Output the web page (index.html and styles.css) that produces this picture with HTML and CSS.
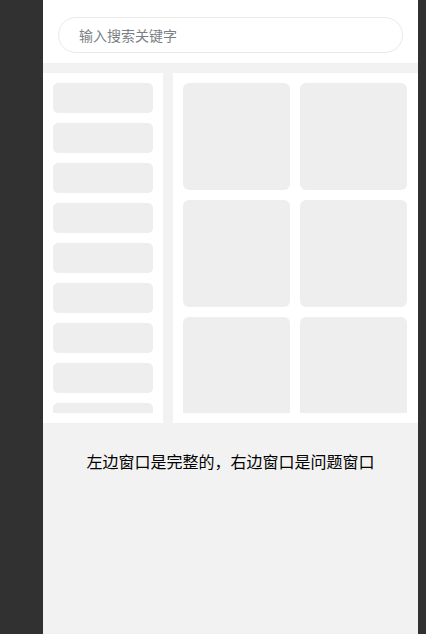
FILE: index.html
```html
<!DOCTYPE html>
<html lang="zh-CN">
<head>
<meta charset="utf-8">
<title>骨架屏</title>
<link rel="stylesheet" href="styles.css">
</head>
<body>
<div class="phone">
  <div class="header">
    <input class="search" type="text" placeholder="输入搜索关键字">
  </div>
  <div class="content">
    <div class="side">
      <div class="side-list">
        <div class="side-item"></div>
        <div class="side-item"></div>
        <div class="side-item"></div>
        <div class="side-item"></div>
        <div class="side-item"></div>
        <div class="side-item"></div>
        <div class="side-item"></div>
        <div class="side-item"></div>
        <div class="side-item"></div>
        <div class="side-item"></div>
      </div>
    </div>
    <div class="main">
      <div class="grid">
        <div class="card"></div>
        <div class="card"></div>
        <div class="card"></div>
        <div class="card"></div>
        <div class="card"></div>
        <div class="card"></div>
      </div>
    </div>
  </div>
  <p class="note">左边窗口是完整的，右边窗口是问题窗口</p>
</div>
</body>
</html>
```

FILE: styles.css
```css
html, body {
  margin: 0;
  padding: 0;
  background: #313131;
  font-family: "Liberation Sans", "Noto Sans CJK SC", sans-serif;
}

.phone {
  width: 375px;
  height: 634px;
  margin-left: 43px;
  background: #f2f2f2;
  overflow: hidden;
}

.header {
  background: #ffffff;
  padding: 17px 15px 10px;
}

.search {
  display: block;
  box-sizing: border-box;
  width: 100%;
  height: 36px;
  margin: 0;
  border: 1px solid #e9e9e9;
  border-radius: 18px;
  padding: 0 20px;
  font-size: 14px;
  font-family: "Noto Sans CJK SC", sans-serif;
  color: #333;
  background: #fff;
  outline: none;
}

.search::placeholder {
  color: #7a7f86;
}

.content {
  margin-top: 10px;
  height: 350px;
  display: flex;
  gap: 10px;
}

.side {
  width: 120px;
  box-sizing: border-box;
  padding: 10px;
  background: #fff;
}

.side-list {
  height: 100%;
  overflow: hidden;
  display: flex;
  flex-direction: column;
  gap: 10px;
}

.side-item {
  flex: none;
  height: 30px;
  border-radius: 5px;
  background: #eeeeee;
}

.main {
  flex: 1;
  box-sizing: border-box;
  padding: 10px;
  background: #fff;
}

.grid {
  height: 100%;
  overflow: hidden;
  display: grid;
  grid-template-columns: 107px 107px;
  grid-auto-rows: 107px;
  gap: 10px;
  align-content: start;
}

.card {
  border-radius: 6px;
  background: #eeeeee;
}

.note {
  margin: 0;
  padding-top: 27px;
  text-align: center;
  font-size: 16px;
  line-height: 22px;
  color: #000;
  font-family: "Noto Sans CJK SC", sans-serif;
}
```
